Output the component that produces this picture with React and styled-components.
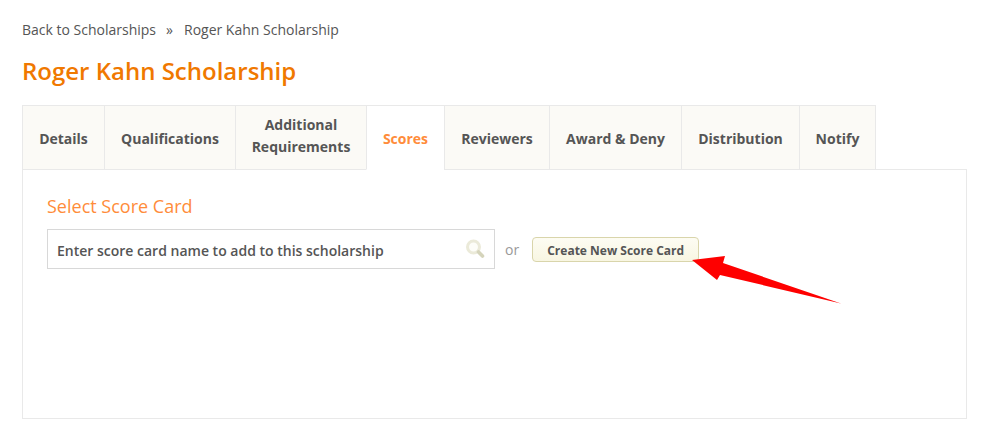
import React from "react";
import styled, { createGlobalStyle } from "styled-components";

const tabs = [
    { label: "Details", width: 83 },
    { label: "Qualifications", width: 132 },
    { label: "Additional Requirements", width: 132, wrapped: true },
    { label: "Scores", width: 79, active: true },
    { label: "Reviewers", width: 106 },
    { label: "Award & Deny", width: 133 },
    { label: "Distribution", width: 119 },
    { label: "Notify", width: 77 },
];

function SearchIcon() {
    return (
        <svg width="20" height="20" viewBox="0 0 20 20">
            <circle cx="8.5" cy="8" r="6" fill="#fdfdf8" stroke="#ebead9" strokeWidth="3" />
            <path d="M13.5 13 L17.5 17" stroke="#d5d4bb" strokeWidth="3.6" strokeLinecap="round" />
        </svg>
    );
}

export default function App() {
    return (
        <Page>
            <GlobalStyle />
            <Breadcrumb>
                <a>Back to Scholarships</a>
                <Separator>»</Separator>
                <span>Roger Kahn Scholarship</span>
            </Breadcrumb>
            <Title>Roger Kahn Scholarship</Title>
            <TabBar>
                {tabs.map((tab) => (
                    <Tab key={tab.label} $width={tab.width} $active={tab.active} $wrapped={tab.wrapped}>
                        {tab.label}
                    </Tab>
                ))}
            </TabBar>
            <Panel>
                <SectionTitle>Select Score Card</SectionTitle>
                <ControlRow>
                    <SearchBox>
                        <SearchText>Enter score card name to add to this scholarship</SearchText>
                        <SearchIcon />
                    </SearchBox>
                    <OrText>or</OrText>
                    <CreateButton>Create New Score Card</CreateButton>
                </ControlRow>
                <Arrow width="150" height="52" viewBox="0 0 150 52">
                    <polygon points="0,6 33,2 31,9 149,49.5 28,21 25,26" fill="#fe0000" />
                </Arrow>
            </Panel>
        </Page>
    );
}

const GlobalStyle = createGlobalStyle`
    html, body {
        margin: 0;
        background: #fff;
    }
    body {
        font-family: "Open Sans", sans-serif;
        color: #555;
    }
`;
const Page = styled.div`
    width: 985px;
    height: 436px;
    box-sizing: border-box;
    padding: 20px 18px 0 22px;
    overflow: hidden;
`;
const Breadcrumb = styled.div`
    display: flex;
    align-items: center;
    height: 20px;
    font-size: 14px;
    line-height: 20px;
    color: #555;
`;
const Separator = styled.span`
    margin: 0 11px 0 10px;
`;
const Title = styled.h1`
    margin: 14px 0 17px;
    font-size: 24px;
    line-height: 34px;
    font-weight: 600;
    color: #f07800;
`;
const TabBar = styled.div`
    display: flex;
    height: 65px;
    position: relative;
    z-index: 1;
`;
const Tab = styled.div`
    box-sizing: border-box;
    width: ${(p) => p.$width}px;
    margin-right: -1px;
    display: flex;
    align-items: center;
    justify-content: center;
    text-align: center;
    padding: ${(p) => (p.$wrapped ? "0 12px 4px" : "2px 12px 0")};
    font-size: 14px;
    line-height: 22px;
    font-weight: 700;
    color: ${(p) => (p.$active ? "#ff8c3a" : "#555")};
    background: ${(p) => (p.$active ? "#fff" : "#fbfaf6")};
    border: 1px solid #e9e9e9;
    border-bottom: ${(p) => (p.$active ? "1px solid #fff" : "1px solid #e9e9e9")};
`;
const Panel = styled.div`
    position: relative;
    box-sizing: border-box;
    height: 250px;
    margin-top: -1px;
    padding: 24px 24px;
    border: 1px solid #e9e9e9;
`;
const SectionTitle = styled.h2`
    margin: 0 0 10px;
    font-size: 18px;
    line-height: 25px;
    font-weight: 400;
    color: #ff8c3a;
`;
const ControlRow = styled.div`
    display: flex;
    align-items: center;
`;
const SearchBox = styled.div`
    box-sizing: border-box;
    width: 448px;
    height: 40px;
    display: flex;
    align-items: center;
    justify-content: space-between;
    padding: 0 9px;
    border: 1px solid #d8d8d8;
`;
const SearchText = styled.span`
    padding-top: 2px;
    font-size: 14px;
    font-weight: 600;
    color: #555;
`;
const OrText = styled.span`
    margin: 0 13px 0 10px;
    font-size: 14px;
    color: #999;
`;
const CreateButton = styled.button`
    box-sizing: border-box;
    width: 167px;
    height: 25px;
    padding: 2px 0 0;
    font-family: inherit;
    font-size: 12px;
    font-weight: 700;
    color: #555;
    background: linear-gradient(#fdfcf3, #f8f6e2);
    border: 1px solid #d9d5ab;
    border-radius: 4px;
`;
const Arrow = styled.svg`
    position: absolute;
    left: 669px;
    top: 84px;
`;
